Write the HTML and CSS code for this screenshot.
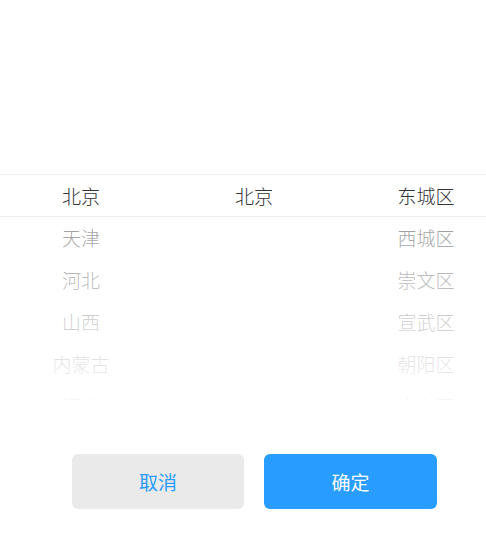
FILE: index.html
```html
<!DOCTYPE html>
<html lang="zh-CN">
<head>
    <meta charset="UTF-8">
    <meta name="viewport" content="width=device-width, initial-scale=1.0">
    <title>选择地区</title>
    <link rel="stylesheet" href="styles.css">
</head>
<body>
    <div class="picker">
        <div class="picker-columns">
            <div class="column col-province">
                <div class="item">北京</div>
                <div class="item">天津</div>
                <div class="item">河北</div>
                <div class="item">山西</div>
                <div class="item">内蒙古</div>
                <div class="item">辽宁</div>
            </div>
            <div class="column col-city">
                <div class="item">北京</div>
            </div>
            <div class="column col-area">
                <div class="item">东城区</div>
                <div class="item">西城区</div>
                <div class="item">崇文区</div>
                <div class="item">宣武区</div>
                <div class="item">朝阳区</div>
                <div class="item">丰台区</div>
            </div>
        </div>
        <div class="picker-mask"></div>
        <div class="picker-indicator"></div>
    </div>
    <div class="actions">
        <button class="btn btn-cancel">取消</button>
        <button class="btn btn-confirm">确定</button>
    </div>
</body>
</html>
```

FILE: styles.css
```css
body {
    margin: 0;
    background-color: #fff;
    font-family: "Noto Sans CJK SC", "Microsoft YaHei", sans-serif;
}

.picker {
    position: relative;
    height: 400px;
    overflow: hidden;
}

.picker-columns {
    display: grid;
    grid-template-columns: 162px 184px 1fr;
    padding-top: 175px;
}

.column {
    text-align: center;
}

.col-area {
    padding-left: 20px;
}

.item {
    height: 42px;
    line-height: 42px;
    font-size: 19px;
    font-weight: 300;
    color: #333;
}

/* fades the rows that sit below the selected one */
.picker-mask {
    position: absolute;
    left: 0;
    right: 0;
    top: 216px;
    bottom: 0;
    background: linear-gradient(to bottom, rgba(255, 255, 255, 0.5), rgba(255, 255, 255, 0.96));
}

.picker-indicator {
    position: absolute;
    left: 0;
    right: 0;
    top: 174px;
    height: 41px;
    border-top: 1px solid #efefef;
    border-bottom: 1px solid #efefef;
}

.actions {
    display: flex;
    gap: 20px;
    padding: 54px 0 0 72px;
}

.btn {
    width: 172px;
    height: 55px;
    border: none;
    border-radius: 6px;
    font-family: inherit;
    font-size: 19px;
    padding: 0;
}

.btn-cancel {
    background-color: #eaeaea;
    color: #2a9bff;
}

.btn-confirm {
    width: 173px;
    background-color: #299cff;
    color: #fff;
}
```
